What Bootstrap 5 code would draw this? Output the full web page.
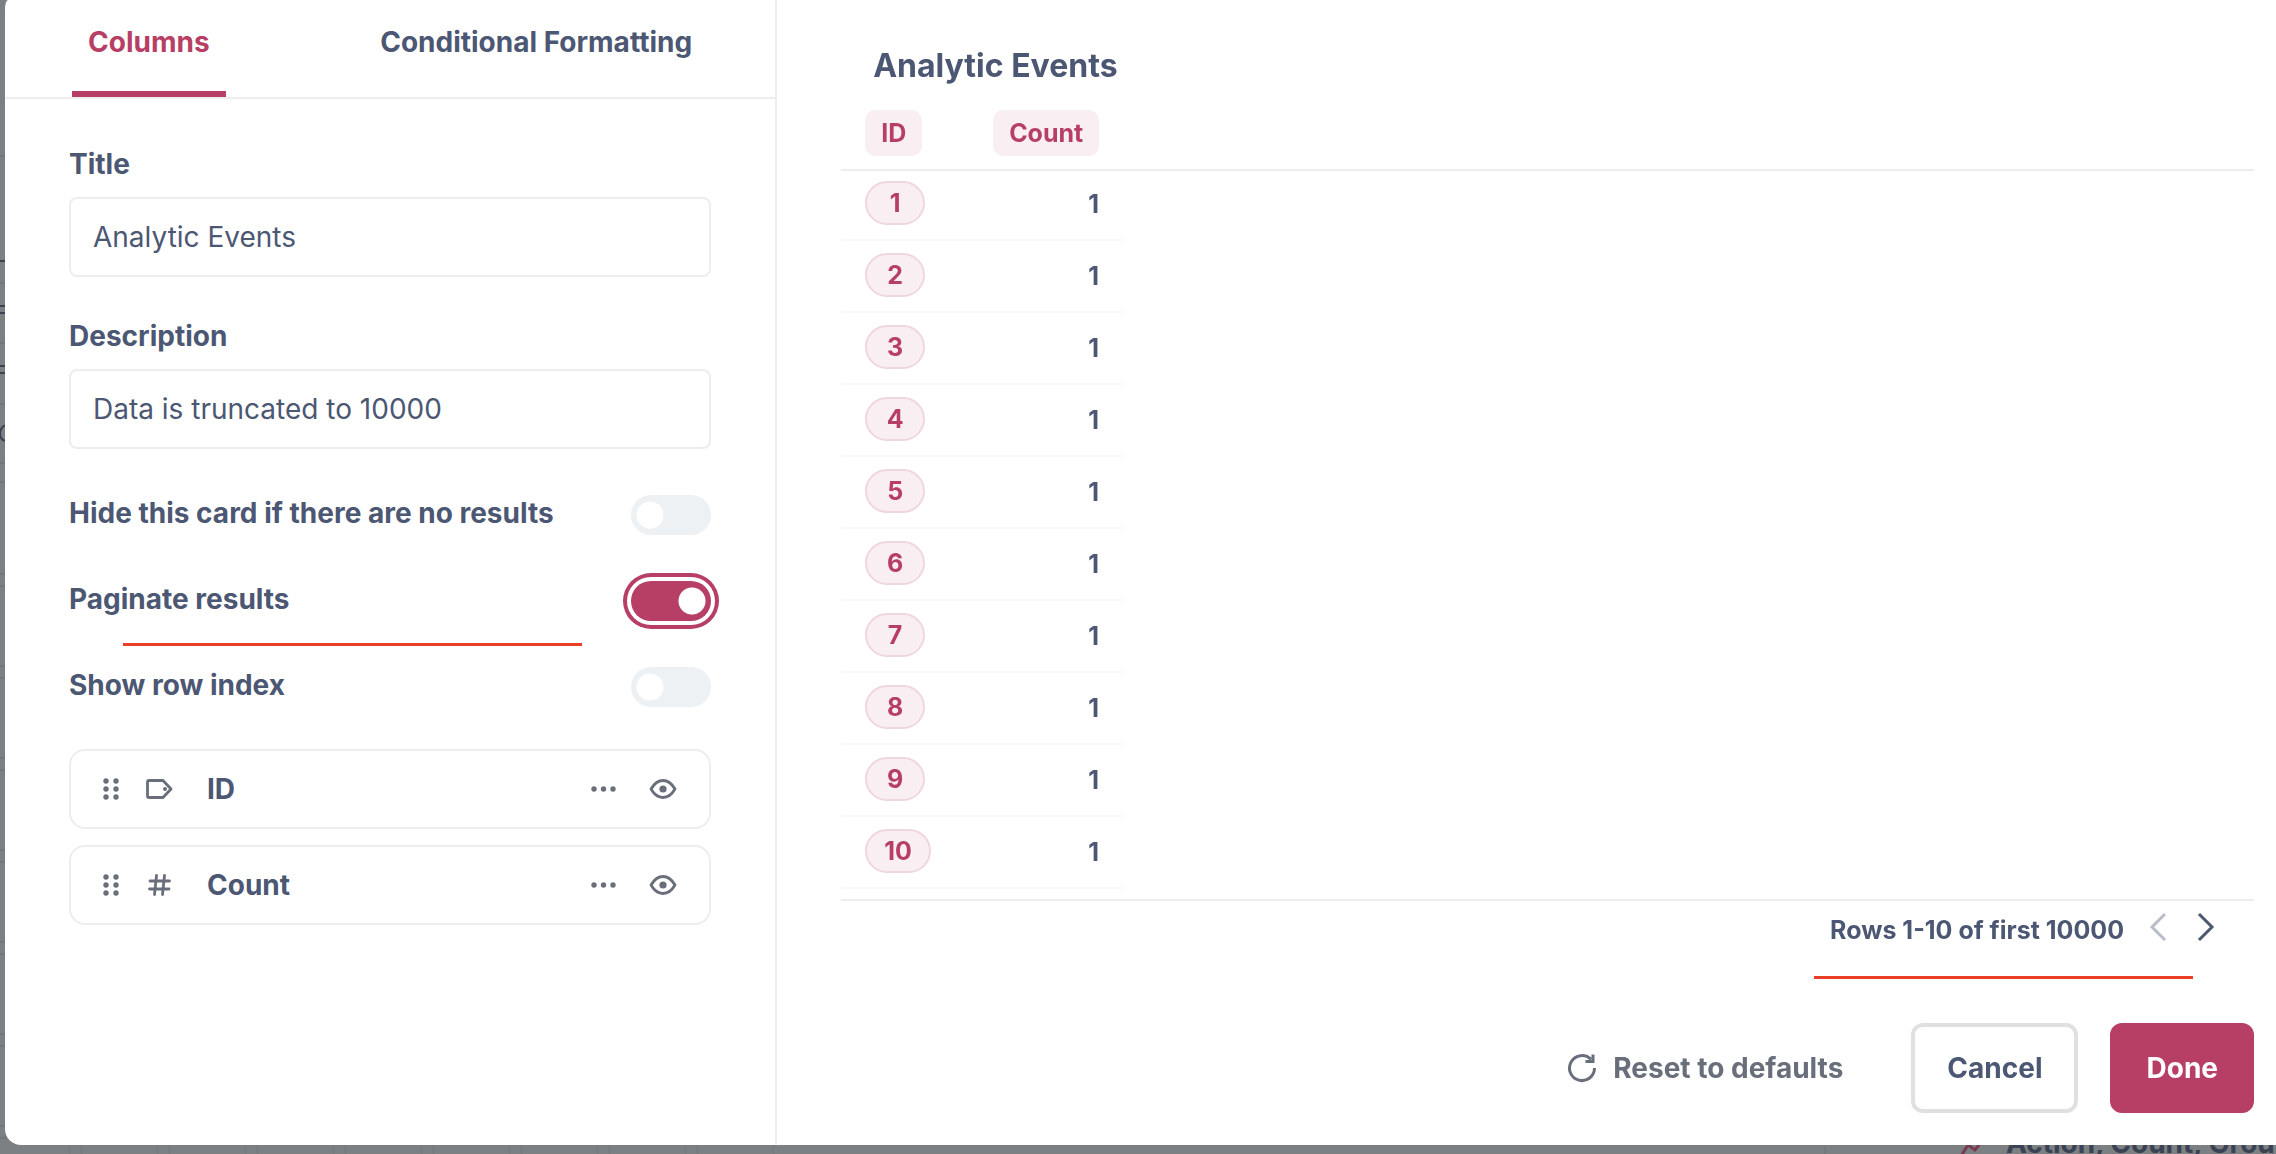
<!DOCTYPE html>
<html lang="en">
<head>
<meta charset="utf-8">
<meta name="viewport" content="width=device-width, initial-scale=1">
<title>Analytic Events – Card settings</title>
<link href="https://cdn.jsdelivr.net/npm/bootstrap@5.3.0/dist/css/bootstrap.min.css" rel="stylesheet">
<style>
  :root { --brand: #b73f66; --brand-soft: #f9eff3; --ink: #4c5773; --muted-ink: #696e7b; --line: #eeeded; --line-soft: #f9f9fa; --note: #ea3f26; }
  body { font-family: Inter, "Liberation Sans", sans-serif; font-size: 28px; line-height: 32px; color: var(--ink); background: #7c8082; overflow-x: hidden; }
  svg { display: block; flex: none; }

  /* dimmed dashboard behind the dialog */
  .backdrop-page { position: fixed; inset: 0; overflow: hidden; background: #7c8082; }
  .backdrop-grid { position: absolute; left: 0; bottom: 0; width: 784px; height: 9px; background: repeating-linear-gradient(90deg, transparent 0 69px, #737779 69px 70px, transparent 70px 81px, #737779 81px 82px, transparent 82px 88px); }
  .backdrop-card { position: absolute; left: 1824px; right: 0; bottom: -5px; color: #3a4254; border-left: 2px solid #75797b; padding-left: 132px; }
  .backdrop-edge { position: absolute; left: 0; top: 0; }

  .dialog-panel { position: relative; margin-left: 5px; min-height: calc(100vh - 9px); background: #fff; border-radius: 3px 0 0 16px / 9px 0 0 16px; }
  .settings-pane { flex: 0 0 34%; min-width: 0; border-right: 2px solid var(--line); }
  .settings-tabs { padding: 26px 67px 0 67px; border-bottom: 2px solid var(--line); }
  .settings-tabs .nav-link { padding: 0 16px 33px; border-bottom: 6px solid transparent; color: var(--ink); }
  .settings-tabs .nav-link.active { color: var(--brand); border-bottom-color: var(--brand); }
  .settings-body { padding: 49px 64px 64px; }
  .settings-body .form-label { margin-bottom: 17px; }
  .field-group { margin-bottom: 43px; }
  .settings-body .form-control { height: 80px; padding: 0 22px; border: 2px solid var(--line); border-radius: 8px; font-size: 28px; color: var(--ink); }
  .switch-list { gap: 46px; margin: 46px 0 42px; }
  .switch-row { min-height: 40px; }
  .switch-row label { padding-bottom: 4px; }
  .toggle-input { appearance: none; flex: none; width: 80px; height: 40px; margin: 0; border-radius: 20px; background: radial-gradient(circle at 19px 20px, #fff 13px, transparent 14px) #edf1f4; }
  .toggle-input:checked { background: radial-gradient(circle at 61px 20px, #fff 13px, transparent 14px) var(--brand); }
  .toggle-ring { box-shadow: 0 0 0 4px #fff, 0 0 0 8px var(--brand); }
  .column-item { height: 80px; padding: 0 32px 0 30px; border: 2px solid var(--line); border-radius: 16px; color: var(--muted-ink); }
  .column-name { color: var(--ink); margin-left: 34px; }
  .icon-btn { padding: 0; border: 0; background: none; color: inherit; }
  .column-item .eye-btn { margin-left: 32px; }
  .note-line { position: absolute; height: 3px; background: var(--note); }
  .note-switch { left: 54px; right: 129px; bottom: -25px; }
  .note-pager { left: -16px; bottom: -33px; width: 379px; }

  .preview-pane { padding: 46px 22px 32px 64px; min-width: 0; }
  .preview-title { margin: 0; padding-left: 32px; font-size: 32px; line-height: 40px; font-weight: 700; }
  .data-grid { border-collapse: separate; border-spacing: 0; table-layout: fixed; font-size: 25px; font-weight: 700; margin-bottom: 10px; }
  .data-grid th { padding: 24px 24px 13px; border-bottom: 2px solid var(--line); }
  .data-grid td { padding: 12px 24px 14px; border-bottom: 2px solid var(--line-soft); vertical-align: middle; }
  .data-grid tr:first-child td { padding-top: 10px; }
  .data-grid .col-id { width: 128px; }
  .data-grid .col-count { width: 154px; }
  .data-grid td:last-child { text-align: right; padding-top: 14px; }
  .data-grid tr:first-child td:last-child { padding-top: 12px; }
  .head-chip { display: inline-block; padding: 0 16px; border: 0; height: 46px; line-height: 46px; border-radius: 10px; font-weight: 700; vertical-align: top; }
  .head-chip, .id-chip { background: var(--brand-soft); color: var(--brand); }
  .id-chip { display: block; width: fit-content; min-width: 60px; height: 44px; padding: 0 17px; border: 2px solid #f0d6df; border-radius: 22px; line-height: 40px; text-align: center; text-decoration: none; }
  .pager { border-top: 2px solid var(--line); padding: 10px 39px 0 0; font-size: 25px; }
  .pager-text { position: relative; margin: 3px 25px 0 0; }
  .pager .icon-btn { height: 32px; }
  .pager .icon-btn:disabled { color: #b8bdc9; margin-right: 30px; }
  .dialog-actions { gap: 32px; }
  .dialog-actions .btn { height: 90px; padding: 0 32px; border: 4px solid #e1e0e0; border-radius: 12px; font-size: 28px; font-weight: 700; color: var(--ink); }
  .dialog-actions .btn-done { background: var(--brand); border-color: var(--brand); color: #fff; }
  .dialog-actions .btn-reset { border-color: transparent; color: var(--muted-ink); }
</style>
</head>
<body>
<div class="backdrop-page" aria-hidden="true">
  <svg class="backdrop-edge" width="6" height="1154" fill="none">
    <path stroke="#737779" stroke-width="2" d="M0 156H6M0 283H6M0 343H6M0 404H6M0 463H6M0 482H6M0 574H6M0 586H6M0 666H6M0 678H6M0 758H6M0 770H6M0 850H6M0 862H6M0 942H6M0 954H6M0 1034H6M0 1046H6M0 1126H6M0 1138H6"/>
    <path stroke="#3a4254" stroke-width="2" d="M0 261H6M0 306H6M0 313H6M0 366H6M0 373H6M6 425Q0 427 0 434Q0 440 6 441"/>
  </svg>
  <div class="backdrop-grid"></div>
  <div class="backdrop-card d-flex fw-bold text-nowrap">
    <svg width="24" height="32" fill="none" stroke="#7b3a53" stroke-width="3"><path d="M3 29L10 18L17 23L24 14"/></svg>
    <span class="ms-4">Action, Count, Group</span>
  </div>
</div>

<main class="dialog-panel d-flex">
  <aside class="settings-pane">
    <nav class="settings-tabs nav justify-content-between fw-bold">
      <a class="nav-link active" aria-current="page" href="#columns">Columns</a>
      <a class="nav-link" href="#formatting">Conditional Formatting</a>
    </nav>
    <form class="settings-body" id="columns">
      <div class="field-group">
        <label class="form-label d-block fw-bold" for="card-title">Title</label>
        <input class="form-control" id="card-title" type="text" value="Analytic Events">
      </div>
      <div>
        <label class="form-label d-block fw-bold" for="card-desc">Description</label>
        <input class="form-control" id="card-desc" type="text" value="Data is truncated to 10000">
      </div>
      <div class="switch-list d-flex flex-column">
        <div class="switch-row d-flex align-items-center justify-content-between">
          <label class="fw-bold" for="sw-hide">Hide this card if there are no results</label>
          <input class="toggle-input" id="sw-hide" type="checkbox" role="switch">
        </div>
        <div class="switch-row position-relative d-flex align-items-center justify-content-between">
          <label class="fw-bold" for="sw-page">Paginate results</label>
          <input class="toggle-input toggle-ring" id="sw-page" type="checkbox" role="switch" checked>
          <span class="note-line note-switch"></span>
        </div>
        <div class="switch-row d-flex align-items-center justify-content-between">
          <label class="fw-bold" for="sw-index">Show row index</label>
          <input class="toggle-input" id="sw-index" type="checkbox" role="switch">
        </div>
      </div>
      <div class="d-flex flex-column gap-3" id="column-list"></div>
    </form>
  </aside>

  <section class="preview-pane flex-grow-1 d-flex flex-column">
    <h1 class="preview-title">Analytic Events</h1>
    <table class="data-grid w-100">
      <colgroup><col class="col-id"><col class="col-count"><col></colgroup>
      <thead><tr>
        <th scope="col"><button type="button" class="head-chip">ID</button></th>
        <th scope="col"><button type="button" class="head-chip">Count</button></th>
        <th aria-hidden="true"></th>
      </tr></thead>
      <tbody id="grid-rows"></tbody>
    </table>
    <div class="pager d-flex justify-content-end fw-bold">
      <span class="pager-text">Rows 1-10 of first 10000<span class="note-line note-pager"></span></span>
      <button type="button" class="icon-btn" aria-label="Previous page" disabled><svg width="18" height="32" fill="none" stroke="currentColor" stroke-width="3"><path d="M16 3L3 16L16 29"/></svg></button>
      <button type="button" class="icon-btn" aria-label="Next page"><svg width="18" height="32" fill="none" stroke="currentColor" stroke-width="3"><path d="M2 3L15 16L2 29"/></svg></button>
    </div>
    <div class="dialog-actions d-flex justify-content-end mt-auto">
      <button type="button" class="btn btn-reset d-flex align-items-center gap-3">
        <svg width="30" height="32" viewBox="0 0 30 32" fill="none" stroke="currentColor" stroke-width="3"><path d="M27.500 16A12.500 12.500 0 1 1 24 7.400M26 2.500V9.500H18.500"/></svg>
        Reset to defaults
      </button>
      <button type="button" class="btn">Cancel</button>
      <button type="button" class="btn btn-done">Done</button>
    </div>
  </section>
</main>

<script src="https://cdn.jsdelivr.net/npm/bootstrap@5.3.0/dist/js/bootstrap.bundle.min.js"></script>
<script>
  const typeIcons = {
    ID: '<path d="M4 5.500H18L26 14L18 22.500H4Q2.500 22.500 2.500 21V7Q2.500 5.500 4 5.500Z" stroke-linejoin="round"/><circle cx="20" cy="14" r="2" fill="currentColor" stroke="none"/>',
    Count: '<path d="M11.500 4.500L9.500 23.500M19.500 4.500L17.500 23.500M5 10H24.500M4.500 18H24" stroke-linecap="round"/>'
  };
  const list = document.getElementById('column-list');
  for (const name of Object.keys(typeIcons)) {
    list.insertAdjacentHTML('beforeend', `
      <div class="column-item d-flex align-items-center fw-bold">
        <svg width="20" height="24" fill="currentColor"><circle cx="5" cy="4" r="2.700"/><circle cx="15" cy="4" r="2.700"/><circle cx="5" cy="12" r="2.700"/><circle cx="15" cy="12" r="2.700"/><circle cx="5" cy="20" r="2.700"/><circle cx="15" cy="20" r="2.700"/></svg>
        <svg class="ms-4" width="28" height="28" fill="none" stroke="currentColor" stroke-width="2.800">${typeIcons[name]}</svg>
        <span class="column-name">${name}</span>
        <button type="button" class="icon-btn ms-auto" aria-label="${name} options"><svg width="26" height="28" fill="currentColor"><circle cx="3" cy="14" r="2.700"/><circle cx="12.500" cy="14" r="2.700"/><circle cx="22" cy="14" r="2.700"/></svg></button>
        <button type="button" class="icon-btn eye-btn" aria-label="Hide ${name}"><svg width="28" height="28" fill="none" stroke="currentColor" stroke-width="2.800"><path d="M2 14Q7 5.500 14 5.500T26 14Q21 22.500 14 22.500T2 14Z" stroke-linejoin="round"/><circle cx="14" cy="14" r="3.600" fill="currentColor" stroke="none"/></svg></button>
      </div>`);
  }
  const rows = document.getElementById('grid-rows');
  for (let id = 1; id <= 10; id++) {
    rows.insertAdjacentHTML('beforeend', `<tr><td><a class="id-chip" href="#row-${id}">${id}</a></td><td>1</td></tr>`);
  }
</script>
</body>
</html>
